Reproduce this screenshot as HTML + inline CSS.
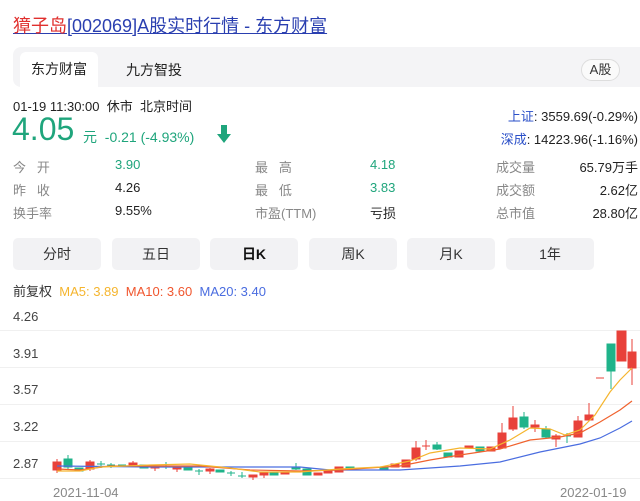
<!DOCTYPE html>
<html><head><meta charset="utf-8"><style>
*{margin:0;padding:0;box-sizing:border-box}
body{width:640px;height:501px;background:#fff;font-family:"Liberation Sans","Noto Sans CJK SC",sans-serif;color:#333;position:relative;overflow:hidden}
.a{position:absolute;white-space:nowrap}
.t{font-size:18px;top:12px;left:13px;text-decoration:underline;color:#2a3fb0}
.t span{color:#e0302e}
.panel{left:13px;top:47px;width:640px;height:40px;background:#f4f4f6;border-radius:8px}
.tab{top:52px;left:20px;width:78px;height:35px;background:#fff;border-radius:6px 6px 0 0;font-size:14px;text-align:center;line-height:35px;color:#222}
.lbl{color:#888;font-size:13px}
.v{font-size:13px;color:#222}
.g{color:#1fa57c}
.btn{top:238px;width:88px;height:32px;background:#f2f2f4;border-radius:5px;font-size:14px;text-align:center;line-height:32px;color:#333}
</style></head><body>
<div class="a t"><span>獐子岛</span>[002069]A股实时行情 - 东方财富</div>
<div class="a panel"></div>
<div class="a tab">东方财富</div>
<div class="a" style="top:60px;left:126px;font-size:14px;color:#222">九方智投</div>
<div class="a" style="top:59px;left:581px;width:39px;height:22px;border:1px solid #ddd;border-radius:11px;background:#fafafa;font-size:13px;text-align:center;line-height:20px">A股</div>
<div class="a v" style="top:96px;left:13px">01-19 11:30:00&nbsp; 休市&nbsp; 北京时间</div>
<div class="a g" style="top:111px;left:12px;font-size:32px">4.05</div>
<div class="a g" style="top:127px;left:83px;font-size:14px">元&nbsp; -0.21 (-4.93%)</div>
<svg class="a" style="top:124px;left:216px" width="16" height="20"><path d="M5 1h6v9h4l-7 9-7-9h4z" fill="#1fa57c"/></svg>
<div class="a v" style="top:106px;right:2px"><span style="color:#2a4fc8">上证</span>: 3559.69(-0.29%)</div>
<div class="a v" style="top:129px;right:2px"><span style="color:#2a4fc8">深成</span>: 14223.96(-1.16%)</div>

<div class="a lbl" style="top:157px;left:13px">今&nbsp;&nbsp;&nbsp;开</div><div class="a v g" style="top:157px;left:115px">3.90</div>
<div class="a lbl" style="top:180px;left:13px">昨&nbsp;&nbsp;&nbsp;收</div><div class="a v" style="top:180px;left:115px">4.26</div>
<div class="a lbl" style="top:203px;left:13px">换手率</div><div class="a v" style="top:203px;left:115px">9.55%</div>
<div class="a lbl" style="top:157px;left:255px">最&nbsp;&nbsp;&nbsp;高</div><div class="a v g" style="top:157px;left:370px">4.18</div>
<div class="a lbl" style="top:180px;left:255px">最&nbsp;&nbsp;&nbsp;低</div><div class="a v g" style="top:180px;left:370px">3.83</div>
<div class="a lbl" style="top:203px;left:255px">市盈(TTM)</div><div class="a v" style="top:203px;left:370px">亏损</div>
<div class="a lbl" style="top:157px;left:496px">成交量</div><div class="a v" style="top:157px;right:2px">65.79万手</div>
<div class="a lbl" style="top:180px;left:496px">成交额</div><div class="a v" style="top:180px;right:2px">2.62亿</div>
<div class="a lbl" style="top:203px;left:496px">总市值</div><div class="a v" style="top:203px;right:2px">28.80亿</div>

<div class="a btn" style="left:13px">分时</div>
<div class="a btn" style="left:112px">五日</div>
<div class="a btn" style="left:210px;font-weight:bold;color:#111">日K</div>
<div class="a btn" style="left:309px">周K</div>
<div class="a btn" style="left:407px">月K</div>
<div class="a btn" style="left:506px">1年</div>
<div class="a" style="top:281px;left:13px;font-size:13px"><span style="color:#333">前复权</span>&nbsp;&nbsp;<span style="color:#f5b52e">MA5: 3.89</span>&nbsp;&nbsp;<span style="color:#f0562e">MA10: 3.60</span>&nbsp;&nbsp;<span style="color:#4a6de0">MA20: 3.40</span></div>

<div class="a" style="top:309px;left:13px;font-size:13px;color:#444">4.26</div>
<div class="a" style="top:346px;left:13px;font-size:13px;color:#444">3.91</div>
<div class="a" style="top:382px;left:13px;font-size:13px;color:#444">3.57</div>
<div class="a" style="top:419px;left:13px;font-size:13px;color:#444">3.22</div>
<div class="a" style="top:456px;left:13px;font-size:13px;color:#444">2.87</div>
<div class="a" style="top:485px;left:53px;font-size:13px;color:#888">2021-11-04</div>
<div class="a" style="top:485px;left:560px;font-size:13px;color:#888">2022-01-19</div>

<svg class="a" style="top:0;left:0" width="640" height="501">
<g stroke="#f0f0f0" stroke-width="1">
<line x1="0" y1="330.5" x2="640" y2="330.5"/><line x1="0" y1="367.5" x2="640" y2="367.5"/><line x1="0" y1="404.5" x2="640" y2="404.5"/><line x1="0" y1="441.5" x2="640" y2="441.5"/><line x1="0" y1="478.5" x2="640" y2="478.5"/>
</g>
<g fill="#e8413a" stroke="#e8413a" stroke-width="1">
<line x1="57" y1="459" x2="57" y2="473"/><rect x="53" y="462" width="8" height="8"/>
<line x1="90" y1="460" x2="90" y2="471"/><rect x="86" y="462" width="8" height="7"/>
<rect x="129" y="463" width="8" height="3"/><line x1="133" y1="461" x2="133" y2="467"/>
<rect x="151" y="466" width="8" height="2"/><line x1="155" y1="465" x2="155" y2="471"/>
<rect x="173" y="467" width="8" height="2"/><line x1="177" y1="466" x2="177" y2="472"/>
<rect x="206" y="469" width="8" height="2"/><line x1="210" y1="468" x2="210" y2="474"/>
<rect x="249" y="475" width="8" height="2"/><line x1="253" y1="475" x2="253" y2="480"/>
<rect x="260" y="472" width="8" height="3"/><line x1="264" y1="472" x2="264" y2="478"/>
<rect x="281" y="472" width="8" height="2"/>
<rect x="314" y="473" width="8" height="2"/>
<rect x="324" y="470" width="8" height="3"/>
<rect x="335" y="467" width="8" height="5"/>
<line x1="357" y1="468" x2="365" y2="468"/>
<rect x="391" y="464" width="8" height="3"/>
<rect x="402" y="460" width="8" height="7"/>
<line x1="416" y1="441" x2="416" y2="461"/><rect x="412" y="448" width="8" height="11"/>
<line x1="426" y1="440" x2="426" y2="450"/><line x1="422" y1="446" x2="430" y2="446"/>
<rect x="455" y="451" width="8" height="6"/>
<rect x="465" y="446" width="8" height="2"/>
<rect x="487" y="447" width="8" height="4"/>
<line x1="502" y1="423" x2="502" y2="449"/><rect x="498" y="433" width="8" height="15"/>
<line x1="513" y1="406" x2="513" y2="431"/><rect x="509" y="418" width="8" height="11"/>
<line x1="535" y1="420" x2="535" y2="432"/><rect x="531" y="425" width="8" height="2"/>
<line x1="556" y1="434" x2="556" y2="447"/><rect x="552" y="436" width="8" height="3"/>
<line x1="578" y1="416" x2="578" y2="437"/><rect x="574" y="421" width="8" height="16"/>
<line x1="589" y1="403" x2="589" y2="421"/><rect x="585" y="415" width="8" height="5"/>
<line x1="596" y1="378" x2="604" y2="378"/>
<rect x="617" y="331" width="9" height="30"/>
<line x1="632" y1="339" x2="632" y2="385"/><rect x="628" y="352" width="8" height="16"/>
</g>
<g fill="#1fb38a" stroke="#1fb38a" stroke-width="1">
<line x1="68" y1="455" x2="68" y2="469"/><rect x="64" y="459" width="8" height="8"/>
<rect x="75" y="468" width="8" height="3"/>
<line x1="97" y1="464" x2="105" y2="464"/><line x1="101" y1="461" x2="101" y2="468"/>
<line x1="107" y1="465" x2="115" y2="465"/><line x1="111" y1="463" x2="111" y2="468"/>
<line x1="118" y1="465" x2="126" y2="465"/>
<rect x="140" y="465" width="8" height="3"/>
<line x1="162" y1="466" x2="170" y2="466"/><line x1="166" y1="462" x2="166" y2="469"/>
<rect x="184" y="468" width="8" height="2"/>
<line x1="195" y1="471" x2="203" y2="471"/><line x1="199" y1="469" x2="199" y2="475"/>
<rect x="216" y="470" width="8" height="2"/>
<line x1="227" y1="473" x2="235" y2="473"/><line x1="231" y1="471" x2="231" y2="476"/>
<line x1="238" y1="476" x2="246" y2="476"/><line x1="242" y1="472" x2="242" y2="478"/>
<rect x="270" y="473" width="8" height="2"/>
<line x1="296" y1="463" x2="296" y2="470"/><rect x="292" y="467" width="8" height="2"/>
<rect x="303" y="469" width="8" height="6"/>
<rect x="346" y="467" width="8" height="2"/>
<rect x="380" y="467" width="8" height="2"/>
<rect x="433" y="445" width="8" height="4"/><line x1="437" y1="442" x2="437" y2="450"/>
<rect x="444" y="453" width="8" height="4"/>
<rect x="476" y="447" width="8" height="4"/>
<line x1="524" y1="412" x2="524" y2="429"/><rect x="520" y="417" width="8" height="10"/>
<line x1="546" y1="426" x2="546" y2="438"/><rect x="542" y="429" width="8" height="8"/>
<line x1="567" y1="433" x2="567" y2="443"/><line x1="563" y1="436" x2="571" y2="436"/>
<line x1="611" y1="344" x2="611" y2="389"/><rect x="607" y="344" width="8" height="27"/>
</g>
<g fill="none" stroke-width="1.2">
<polyline stroke="#4a6de0" points="57,466 150,467 300,467 330,470 400,470 460,466 500,462 540,452 580,444 600,438 620,428 632,421"/>
<polyline stroke="#f0622e" points="57,469 80,470 110,466 150,466 200,466 250,470 300,471 340,470 400,466 430,460 460,455 500,449 530,440 560,437 580,433 600,422 620,410 632,401"/>
<polyline stroke="#f5b52e" points="57,471 80,471 100,467 150,465 190,464 230,468 260,472 300,472 340,469 380,467 410,461 430,453 460,448 490,449 510,440 530,428 550,429 565,435 580,430 595,415 610,392 620,380 632,368"/>
</g>
</svg>
</body></html>
